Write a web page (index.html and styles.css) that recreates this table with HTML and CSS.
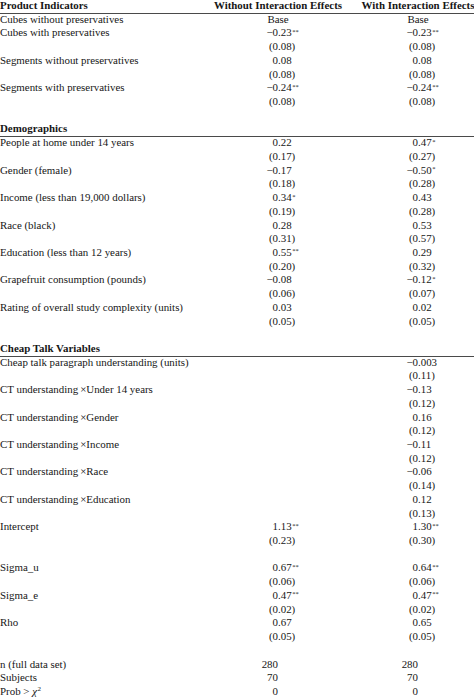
FILE: index.html
```html
<!DOCTYPE html>
<html>
<head>
<meta charset="utf-8">
<link rel="stylesheet" href="styles.css">
</head>
<body>
<div class="table">
  <div class="row head">
    <div class="lab b">Product Indicators</div>
    <div class="hdr b">Without Interaction Effects</div>
    <div class="hdr b">With Interaction Effects</div>
  </div>
  <div class="row"><div class="lab">Cubes without preservatives</div>
    <div class="val"><span class="c">Base</span></div>
    <div class="val"><span class="c">Base</span></div></div>
  <div class="row"><div class="lab">Cubes with preservatives</div>
    <div class="val"><span class="i">−0</span><span class="f">.23<sup>**</sup></span></div>
    <div class="val"><span class="i">−0</span><span class="f">.23<sup>**</sup></span></div></div>
  <div class="row"><div class="lab"></div>
    <div class="val"><span class="i">(0</span><span class="f">.08)</span></div>
    <div class="val"><span class="i">(0</span><span class="f">.08)</span></div></div>
  <div class="row"><div class="lab">Segments without preservatives</div>
    <div class="val"><span class="i">0</span><span class="f">.08</span></div>
    <div class="val"><span class="i">0</span><span class="f">.08</span></div></div>
  <div class="row"><div class="lab"></div>
    <div class="val"><span class="i">(0</span><span class="f">.08)</span></div>
    <div class="val"><span class="i">(0</span><span class="f">.08)</span></div></div>
  <div class="row"><div class="lab">Segments with preservatives</div>
    <div class="val"><span class="i">−0</span><span class="f">.24<sup>**</sup></span></div>
    <div class="val"><span class="i">−0</span><span class="f">.24<sup>**</sup></span></div></div>
  <div class="row"><div class="lab"></div>
    <div class="val"><span class="i">(0</span><span class="f">.08)</span></div>
    <div class="val"><span class="i">(0</span><span class="f">.08)</span></div></div>
  <div class="row"></div>

  <div class="row head"><div class="lab b">Demographics</div></div>
  <div class="row"><div class="lab">People at home under 14 years</div>
    <div class="val"><span class="i">0</span><span class="f">.22</span></div>
    <div class="val"><span class="i">0</span><span class="f">.47<sup>*</sup></span></div></div>
  <div class="row"><div class="lab"></div>
    <div class="val"><span class="i">(0</span><span class="f">.17)</span></div>
    <div class="val"><span class="i">(0</span><span class="f">.27)</span></div></div>
  <div class="row"><div class="lab">Gender (female)</div>
    <div class="val"><span class="i">−0</span><span class="f">.17</span></div>
    <div class="val"><span class="i">−0</span><span class="f">.50<sup>*</sup></span></div></div>
  <div class="row"><div class="lab"></div>
    <div class="val"><span class="i">(0</span><span class="f">.18)</span></div>
    <div class="val"><span class="i">(0</span><span class="f">.28)</span></div></div>
  <div class="row"><div class="lab">Income (less than 19,000 dollars)</div>
    <div class="val"><span class="i">0</span><span class="f">.34<sup>*</sup></span></div>
    <div class="val"><span class="i">0</span><span class="f">.43</span></div></div>
  <div class="row"><div class="lab"></div>
    <div class="val"><span class="i">(0</span><span class="f">.19)</span></div>
    <div class="val"><span class="i">(0</span><span class="f">.28)</span></div></div>
  <div class="row"><div class="lab">Race (black)</div>
    <div class="val"><span class="i">0</span><span class="f">.28</span></div>
    <div class="val"><span class="i">0</span><span class="f">.53</span></div></div>
  <div class="row"><div class="lab"></div>
    <div class="val"><span class="i">(0</span><span class="f">.31)</span></div>
    <div class="val"><span class="i">(0</span><span class="f">.57)</span></div></div>
  <div class="row"><div class="lab">Education (less than 12 years)</div>
    <div class="val"><span class="i">0</span><span class="f">.55<sup>**</sup></span></div>
    <div class="val"><span class="i">0</span><span class="f">.29</span></div></div>
  <div class="row"><div class="lab"></div>
    <div class="val"><span class="i">(0</span><span class="f">.20)</span></div>
    <div class="val"><span class="i">(0</span><span class="f">.32)</span></div></div>
  <div class="row"><div class="lab">Grapefruit consumption (pounds)</div>
    <div class="val"><span class="i">−0</span><span class="f">.08</span></div>
    <div class="val"><span class="i">−0</span><span class="f">.12<sup>*</sup></span></div></div>
  <div class="row"><div class="lab"></div>
    <div class="val"><span class="i">(0</span><span class="f">.06)</span></div>
    <div class="val"><span class="i">(0</span><span class="f">.07)</span></div></div>
  <div class="row"><div class="lab">Rating of overall study complexity (units)</div>
    <div class="val"><span class="i">0</span><span class="f">.03</span></div>
    <div class="val"><span class="i">0</span><span class="f">.02</span></div></div>
  <div class="row"><div class="lab"></div>
    <div class="val"><span class="i">(0</span><span class="f">.05)</span></div>
    <div class="val"><span class="i">(0</span><span class="f">.05)</span></div></div>
  <div class="row"></div>

  <div class="row head"><div class="lab b">Cheap Talk Variables</div></div>
  <div class="row"><div class="lab">Cheap talk paragraph understanding (units)</div>
    <div class="val"></div>
    <div class="val"><span class="i">−0</span><span class="f">.003</span></div></div>
  <div class="row"><div class="lab"></div><div class="val"></div>
    <div class="val"><span class="i">(0</span><span class="f">.11)</span></div></div>
  <div class="row"><div class="lab">CT understanding<span class="x">×</span>Under 14 years</div><div class="val"></div>
    <div class="val"><span class="i">−0</span><span class="f">.13</span></div></div>
  <div class="row"><div class="lab"></div><div class="val"></div>
    <div class="val"><span class="i">(0</span><span class="f">.12)</span></div></div>
  <div class="row"><div class="lab">CT understanding<span class="x">×</span>Gender</div><div class="val"></div>
    <div class="val"><span class="i">0</span><span class="f">.16</span></div></div>
  <div class="row"><div class="lab"></div><div class="val"></div>
    <div class="val"><span class="i">(0</span><span class="f">.12)</span></div></div>
  <div class="row"><div class="lab">CT understanding<span class="x">×</span>Income</div><div class="val"></div>
    <div class="val"><span class="i">−0</span><span class="f">.11</span></div></div>
  <div class="row"><div class="lab"></div><div class="val"></div>
    <div class="val"><span class="i">(0</span><span class="f">.12)</span></div></div>
  <div class="row"><div class="lab">CT understanding<span class="x">×</span>Race</div><div class="val"></div>
    <div class="val"><span class="i">−0</span><span class="f">.06</span></div></div>
  <div class="row"><div class="lab"></div><div class="val"></div>
    <div class="val"><span class="i">(0</span><span class="f">.14)</span></div></div>
  <div class="row"><div class="lab">CT understanding<span class="x">×</span>Education</div><div class="val"></div>
    <div class="val"><span class="i">0</span><span class="f">.12</span></div></div>
  <div class="row"><div class="lab"></div><div class="val"></div>
    <div class="val"><span class="i">(0</span><span class="f">.13)</span></div></div>
  <div class="row"><div class="lab">Intercept</div>
    <div class="val"><span class="i">1</span><span class="f">.13<sup>**</sup></span></div>
    <div class="val"><span class="i">1</span><span class="f">.30<sup>**</sup></span></div></div>
  <div class="row"><div class="lab"></div>
    <div class="val"><span class="i">(0</span><span class="f">.23)</span></div>
    <div class="val"><span class="i">(0</span><span class="f">.30)</span></div></div>
  <div class="row"></div>
  <div class="row"><div class="lab">Sigma_u</div>
    <div class="val"><span class="i">0</span><span class="f">.67<sup>**</sup></span></div>
    <div class="val"><span class="i">0</span><span class="f">.64<sup>**</sup></span></div></div>
  <div class="row"><div class="lab"></div>
    <div class="val"><span class="i">(0</span><span class="f">.06)</span></div>
    <div class="val"><span class="i">(0</span><span class="f">.06)</span></div></div>
  <div class="row"><div class="lab">Sigma_e</div>
    <div class="val"><span class="i">0</span><span class="f">.47<sup>**</sup></span></div>
    <div class="val"><span class="i">0</span><span class="f">.47<sup>**</sup></span></div></div>
  <div class="row"><div class="lab"></div>
    <div class="val"><span class="i">(0</span><span class="f">.02)</span></div>
    <div class="val"><span class="i">(0</span><span class="f">.02)</span></div></div>
  <div class="row"><div class="lab">Rho</div>
    <div class="val"><span class="i">0</span><span class="f">.67</span></div>
    <div class="val"><span class="i">0</span><span class="f">.65</span></div></div>
  <div class="row"><div class="lab"></div>
    <div class="val"><span class="i">(0</span><span class="f">.05)</span></div>
    <div class="val"><span class="i">(0</span><span class="f">.05)</span></div></div>
  <div class="row"></div>
  <div class="row"><div class="lab">n (full data set)</div>
    <div class="val"><span class="i">280</span><span class="f"></span></div>
    <div class="val"><span class="i">280</span><span class="f"></span></div></div>
  <div class="row"><div class="lab">Subjects</div>
    <div class="val"><span class="i">70</span><span class="f"></span></div>
    <div class="val"><span class="i">70</span><span class="f"></span></div></div>
  <div class="row"><div class="lab">Prob &gt; <i>χ</i><sup class="sq">2</sup></div>
    <div class="val"><span class="i">0</span><span class="f"></span></div>
    <div class="val"><span class="i">0</span><span class="f"></span></div></div>
</div>
</body>
</html>
```

FILE: styles.css
```css
html, body {
  margin: 0;
  padding: 0;
  background: #ffffff;
  overflow: hidden;
}
body {
  font-family: "Liberation Serif", "Times New Roman", serif;
  font-size: 10.9px;
  color: #161616;
}
.table {
  width: 474px;
}
.row {
  display: grid;
  grid-template-columns: 208px 140px 126px;
  height: 13.72px;
  line-height: 10px;
  box-sizing: border-box;
  white-space: nowrap;
}
.row.head {
  border-bottom: 1.3px solid #4a4a4a;
}
.b {
  font-weight: bold;
}
.lab {
  overflow: visible;
}
.hdr {
  width: 140px;
  text-align: center;
}
.val {
  display: grid;
  grid-template-columns: 70px 70px;
  width: 140px;
}
.val .i {
  text-align: right;
}
.val .f {
  text-align: left;
}
.val .c {
  grid-column: 1 / -1;
  text-align: center;
}
sup {
  font-size: 6.5px;
  line-height: 0;
  vertical-align: 2.5px;
  margin-left: 0.5px;
}
sup.sq {
  font-size: 7px;
  vertical-align: 3.5px;
}
.x {
  margin-left: 2px;
}
i {
  font-style: italic;
}
```
